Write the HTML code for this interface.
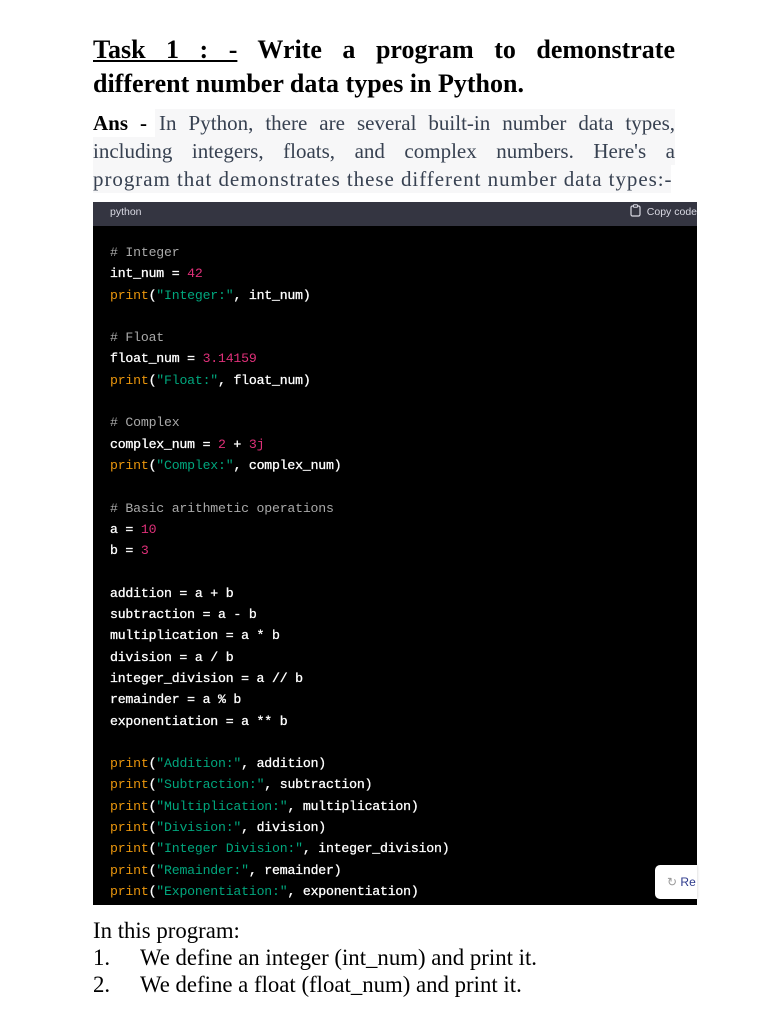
<!DOCTYPE html>
<html><head><meta charset="utf-8"><style>
body{margin:0;background:#fff;width:768px;height:1024px;position:relative;overflow:hidden;font-family:"Liberation Serif",serif}
.t{position:absolute;left:93px;width:582px;font-weight:bold;font-size:26px;line-height:34px;top:33px;color:#000}
.j{display:block;text-align:justify;text-align-last:justify}
.a{position:absolute;left:93px;width:582px;top:109px;font-size:21px;line-height:28px;color:#374151}
.a .j{background:#f7f7f8}
.a .f{background:linear-gradient(to right,#fff 62px,#f7f7f8 62px)}
.a b{color:#000}
.a .l3{display:block;width:578px;background:#f7f7f8;letter-spacing:0.95px;white-space:nowrap}
.cb{position:absolute;left:93px;top:202px;width:604px;height:703px;background:#000}
.hd{height:24px;background:#343541;color:#d9d9e3;font-family:"Liberation Sans",sans-serif;font-size:10.5px;line-height:20px;padding-left:17px;position:relative}
.cp{position:absolute;right:0;top:0;white-space:nowrap}
pre{margin:0;position:absolute;left:17px;top:40px;font-family:"Liberation Mono",monospace;font-size:13.2px;line-height:21.3px;color:#fff;letter-spacing:-0.2px;-webkit-text-stroke:0.3px #fff}
.c{color:#a9a9a9;-webkit-text-stroke:0}.n{color:#df3079;-webkit-text-stroke:0}.p{color:#e9950c;-webkit-text-stroke:0}.s{color:#00a67d;-webkit-text-stroke:0}
.re{position:absolute;left:655px;top:865px;width:42px;height:34px;background:#fff;border-radius:5px 0 0 5px;box-shadow:0 0 3px rgba(0,0,0,.2);font-family:"Liberation Sans",sans-serif;font-size:12px;line-height:34px;color:#2d3a8c;padding-left:12px;box-sizing:border-box;overflow:hidden;white-space:nowrap}
.b{position:absolute;left:93px;font-size:22.8px;line-height:27px;color:#000;top:917px;white-space:nowrap}
.b span{display:inline-block;width:47px}
</style></head><body>
<div class="t"><span class="j"><u>Task 1 : -</u> Write a program to demonstrate</span>different number data types in Python.</div>
<div class="a"><span class="j f"><b>Ans - </b>In Python, there are several built-in number data types,</span><span class="j">including integers, floats, and complex numbers. Here's a</span><span class="l3">program that demonstrates these different number data types:-</span></div>
<div class="cb"><div class="hd">python<span class="cp"><svg width="11" height="13" viewBox="0 0 11 13" style="vertical-align:-2px;margin-right:6px"><rect x="1" y="2" width="9" height="10" rx="1.5" fill="none" stroke="#d9d9e3" stroke-width="1.2"/><rect x="3.5" y="0.8" width="4" height="2.4" rx=".6" fill="#343541" stroke="#d9d9e3" stroke-width="1"/></svg>Copy code</span></div>
<pre><span class="c"># Integer</span>
int_num = <span class="n">42</span>
<span class="p">print</span>(<span class="s">"Integer:"</span>, int_num)

<span class="c"># Float</span>
float_num = <span class="n">3.14159</span>
<span class="p">print</span>(<span class="s">"Float:"</span>, float_num)

<span class="c"># Complex</span>
complex_num = <span class="n">2</span> + <span class="n">3j</span>
<span class="p">print</span>(<span class="s">"Complex:"</span>, complex_num)

<span class="c"># Basic arithmetic operations</span>
a = <span class="n">10</span>
b = <span class="n">3</span>

addition = a + b
subtraction = a - b
multiplication = a * b
division = a / b
integer_division = a // b
remainder = a % b
exponentiation = a ** b

<span class="p">print</span>(<span class="s">"Addition:"</span>, addition)
<span class="p">print</span>(<span class="s">"Subtraction:"</span>, subtraction)
<span class="p">print</span>(<span class="s">"Multiplication:"</span>, multiplication)
<span class="p">print</span>(<span class="s">"Division:"</span>, division)
<span class="p">print</span>(<span class="s">"Integer Division:"</span>, integer_division)
<span class="p">print</span>(<span class="s">"Remainder:"</span>, remainder)
<span class="p">print</span>(<span class="s">"Exponentiation:"</span>, exponentiation)</pre>
</div>
<div class="re"><span style="color:#999">&#8635;</span> Re</div>
<div class="b">In this program:<br><span>1.</span>We define an integer (int_num) and print it.<br><span>2.</span>We define a float (float_num) and print it.</div>
</body></html>
